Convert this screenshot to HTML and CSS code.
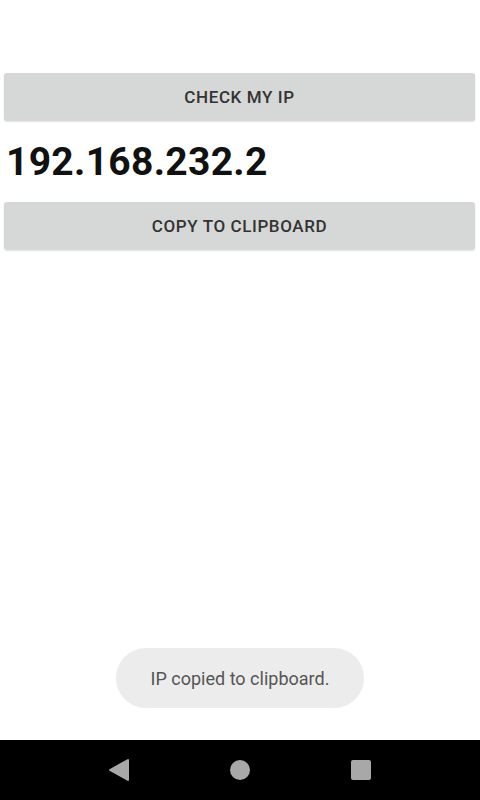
FILE: index.html
```html
<!DOCTYPE html>
<html>
<head>
<meta charset="utf-8">
<link rel="stylesheet" href="styles.css">
</head>
<body>
<div class="screen">
  <main class="content">
    <button class="btn">CHECK MY IP</button>
    <div class="ip">192.168.232.2</div>
    <button class="btn">COPY TO CLIPBOARD</button>
  </main>
  <div class="toast-area">
    <div class="toast">IP copied to clipboard.</div>
  </div>
  <nav class="navbar">
    <svg class="nav-icon" width="22" height="24" viewBox="0 0 22 24"><polygon points="20,2 20,22 2,12" fill="#a8a8a8" stroke="#a8a8a8" stroke-width="2" stroke-linejoin="round"/></svg>
    <svg class="nav-icon" width="22" height="22" viewBox="0 0 22 22"><circle cx="11" cy="11" r="10" fill="#a8a8a8"/></svg>
    <svg class="nav-icon" width="22" height="22" viewBox="0 0 22 22"><rect x="1" y="1" width="20" height="20" rx="2" fill="#a8a8a8"/></svg>
  </nav>
</div>
</body>
</html>
```
FILE: styles.css
```css
html, body {
  margin: 0;
  padding: 0;
  background: #ffffff;
  font-family: Roboto, "Liberation Sans", Arial, sans-serif;
}
.screen {
  width: 480px;
  height: 800px;
  display: flex;
  flex-direction: column;
  overflow: hidden;
}
.content {
  padding: 73px 5px 0 4px;
  display: flex;
  flex-direction: column;
}
.btn {
  height: 48px;
  border: none;
  border-radius: 3px;
  background: #d6d7d7;
  color: #333;
  font-family: Roboto, "Liberation Sans", Arial, sans-serif;
  font-weight: 500;
  font-size: 17px;
  letter-spacing: 0.6px;
  box-shadow: 0 1px 2px rgba(0,0,0,0.12);
  padding: 0;
}
.ip {
  height: 81px;
  display: flex;
  align-items: center;
  padding-left: 2px;
  font-size: 39px;
  font-weight: 700;
  color: #111;
  letter-spacing: 0.3px;
}
.toast-area {
  flex: 1;
  display: flex;
  align-items: flex-end;
  justify-content: center;
  padding-bottom: 32px;
}
.toast {
  width: 248px;
  height: 60px;
  border-radius: 30px;
  background: #ececec;
  color: #555;
  font-size: 18px;
  display: flex;
  align-items: center;
  justify-content: center;
}
.navbar {
  height: 60px;
  background: #000;
  display: flex;
  align-items: center;
  justify-content: center;
  gap: 99px;
}
```
